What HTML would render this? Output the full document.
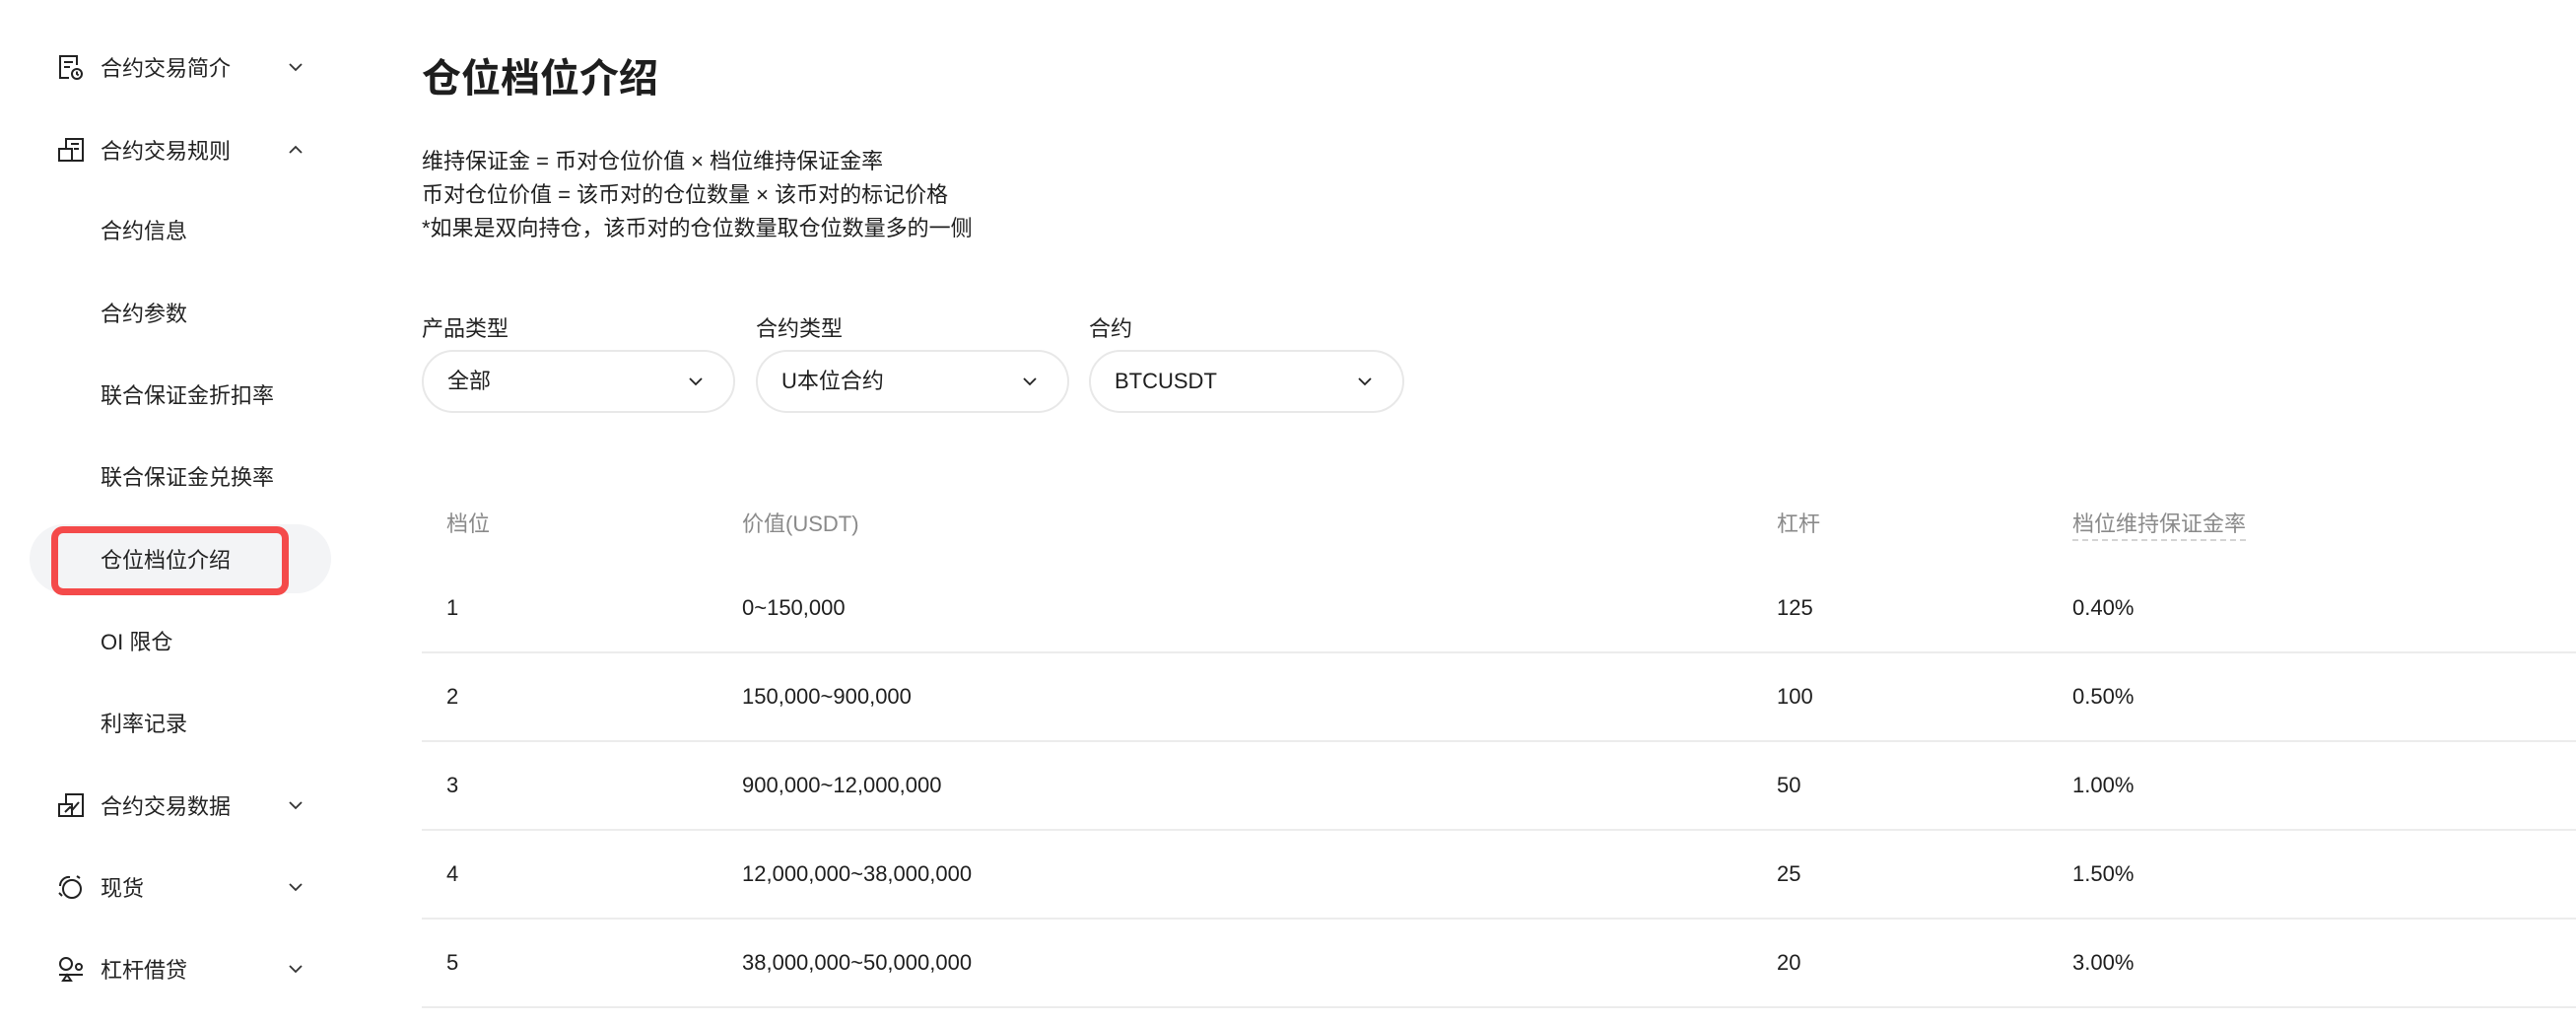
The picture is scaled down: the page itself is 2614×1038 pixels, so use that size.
<!DOCTYPE html>
<html><head><meta charset="utf-8"><style>
*{margin:0;padding:0;box-sizing:border-box}
body{width:2614px;height:1038px;background:#fff;font-family:"Liberation Sans","Noto Sans CJK SC",sans-serif;color:#1e1e1e;position:relative;overflow:hidden}
.a{position:absolute;white-space:nowrap}
.nav{font-size:22px;line-height:30px;color:#222;margin-top:2px}
.ic{position:absolute;left:58px;width:28px;height:28px}
.chev{position:absolute;left:292px;width:16px;height:10px}
.hl{position:absolute;left:30px;top:532px;width:306px;height:70px;background:#f3f4f6;border-radius:35px}
.red{position:absolute;left:52px;top:534px;width:241px;height:70px;border:7px solid #f44a4a;border-radius:12px}
h1{position:absolute;left:428px;top:55px;font-size:40px;font-weight:bold;line-height:50px}
.desc{font-size:22px;line-height:34px}
.lbl{font-size:22px;color:#222}
.dd{position:absolute;top:355px;height:64px;border:2px solid #e8e8e8;border-radius:32px;font-size:22px;line-height:60px;padding-left:24px}
.dd svg{position:absolute;right:30px;top:25px}
.th{font-size:22px;color:#8a8a8a}
.td{font-size:22px;color:#1e1e1e}
.ln{position:absolute;left:428px;width:2186px;height:2px;background:#ececec}
</style></head><body>

<svg class="ic" style="top:54px" viewBox="0 0 28 28" fill="none" stroke="#222" stroke-width="2"><path d="M20 12V3H3v22h9"/><path d="M7 9h9M7 14h6"/><circle cx="20" cy="21" r="5"/><path d="M20 18.5V21l1.7 1.5"/></svg>
<div class="a nav" style="left:102px;top:53px">合约交易简介</div>
<svg class="chev" style="top:63px" viewBox="0 0 16 10" fill="none" stroke="#333" stroke-width="1.8"><path d="M2 2l6 6 6-6"/></svg>

<svg class="ic" style="top:138px" viewBox="0 0 28 28" fill="none" stroke="#222" stroke-width="2"><path d="M9 13V3h17v22H2V13h13v12"/><path d="M14 8h8M17 13h5"/></svg>
<div class="a nav" style="left:102px;top:137px">合约交易规则</div>
<svg class="chev" style="top:147px" viewBox="0 0 16 10" fill="none" stroke="#333" stroke-width="1.8"><path d="M2 8l6-6 6 6"/></svg>

<div class="a nav" style="left:102px;top:218px">合约信息</div>
<div class="a nav" style="left:102px;top:302px">合约参数</div>
<div class="a nav" style="left:102px;top:385px">联合保证金折扣率</div>
<div class="a nav" style="left:102px;top:468px">联合保证金兑换率</div>
<div class="hl"></div>
<div class="red"></div>
<div class="a nav" style="left:102px;top:552px">仓位档位介绍</div>
<div class="a nav" style="left:102px;top:635px">OI 限仓</div>
<div class="a nav" style="left:102px;top:718px">利率记录</div>

<svg class="ic" style="top:803px" viewBox="0 0 28 28" fill="none" stroke="#222" stroke-width="2"><path d="M9 13V3h17v22H2V13h13v12"/><path d="M8 21l5-5 3 2 6-7"/></svg>
<div class="a nav" style="left:102px;top:802px">合约交易数据</div>
<svg class="chev" style="top:812px" viewBox="0 0 16 10" fill="none" stroke="#333" stroke-width="1.8"><path d="M2 2l6 6 6-6"/></svg>

<svg class="ic" style="top:886px" viewBox="0 0 28 28" fill="none" stroke="#222" stroke-width="2"><circle cx="15" cy="16" r="9"/><path d="M3 13a9 9 0 0 1 10-9M20 3l3 2M2 20l3 3"/></svg>
<div class="a nav" style="left:102px;top:885px">现货</div>
<svg class="chev" style="top:895px" viewBox="0 0 16 10" fill="none" stroke="#333" stroke-width="1.8"><path d="M2 2l6 6 6-6"/></svg>

<svg class="ic" style="top:969px" viewBox="0 0 28 28" fill="none" stroke="#222" stroke-width="2"><circle cx="9" cy="9" r="6"/><circle cx="22" cy="12" r="3"/><path d="M2 20h24M10 20l-4 6h8z"/></svg>
<div class="a nav" style="left:102px;top:968px">杠杆借贷</div>
<svg class="chev" style="top:978px" viewBox="0 0 16 10" fill="none" stroke="#333" stroke-width="1.8"><path d="M2 2l6 6 6-6"/></svg>

<h1>仓位档位介绍</h1>
<div class="a desc" style="left:428px;top:147px">维持保证金 = 币对仓位价值 × 档位维持保证金率</div>
<div class="a desc" style="left:428px;top:181px">币对仓位价值 = 该币对的仓位数量 × 该币对的标记价格</div>
<div class="a desc" style="left:428px;top:215px">*如果是双向持仓，该币对的仓位数量取仓位数量多的一侧</div>

<div class="a lbl" style="left:428px;top:316px">产品类型</div>
<div class="a lbl" style="left:767px;top:316px">合约类型</div>
<div class="a lbl" style="left:1105px;top:316px">合约</div>

<div class="dd" style="left:428px;width:318px">全部<svg width="16" height="10" viewBox="0 0 16 10" fill="none" stroke="#222" stroke-width="1.8"><path d="M2 2l6 6 6-6"/></svg></div>
<div class="dd" style="left:767px;width:318px">U本位合约<svg width="16" height="10" viewBox="0 0 16 10" fill="none" stroke="#222" stroke-width="1.8"><path d="M2 2l6 6 6-6"/></svg></div>
<div class="dd" style="left:1105px;width:320px">BTCUSDT<svg width="16" height="10" viewBox="0 0 16 10" fill="none" stroke="#222" stroke-width="1.8"><path d="M2 2l6 6 6-6"/></svg></div>

<div class="a th" style="left:453px;top:514px">档位</div>
<div class="a th" style="left:753px;top:514px">价值(USDT)</div>
<div class="a th" style="left:1803px;top:514px">杠杆</div>
<div class="a th" style="left:2103px;top:514px;border-bottom:2px dashed #d4d4d4;padding-bottom:1px">档位维持保证金率</div>

<div class="a td" style="left:453px;top:604px">1</div><div class="a td" style="left:753px;top:604px">0~150,000</div><div class="a td" style="left:1803px;top:604px">125</div><div class="a td" style="left:2103px;top:604px">0.40%</div>
<div class="ln" style="top:661px"></div>
<div class="a td" style="left:453px;top:694px">2</div><div class="a td" style="left:753px;top:694px">150,000~900,000</div><div class="a td" style="left:1803px;top:694px">100</div><div class="a td" style="left:2103px;top:694px">0.50%</div>
<div class="ln" style="top:751px"></div>
<div class="a td" style="left:453px;top:784px">3</div><div class="a td" style="left:753px;top:784px">900,000~12,000,000</div><div class="a td" style="left:1803px;top:784px">50</div><div class="a td" style="left:2103px;top:784px">1.00%</div>
<div class="ln" style="top:841px"></div>
<div class="a td" style="left:453px;top:874px">4</div><div class="a td" style="left:753px;top:874px">12,000,000~38,000,000</div><div class="a td" style="left:1803px;top:874px">25</div><div class="a td" style="left:2103px;top:874px">1.50%</div>
<div class="ln" style="top:931px"></div>
<div class="a td" style="left:453px;top:964px">5</div><div class="a td" style="left:753px;top:964px">38,000,000~50,000,000</div><div class="a td" style="left:1803px;top:964px">20</div><div class="a td" style="left:2103px;top:964px">3.00%</div>
<div class="ln" style="top:1021px"></div>
</body></html>
